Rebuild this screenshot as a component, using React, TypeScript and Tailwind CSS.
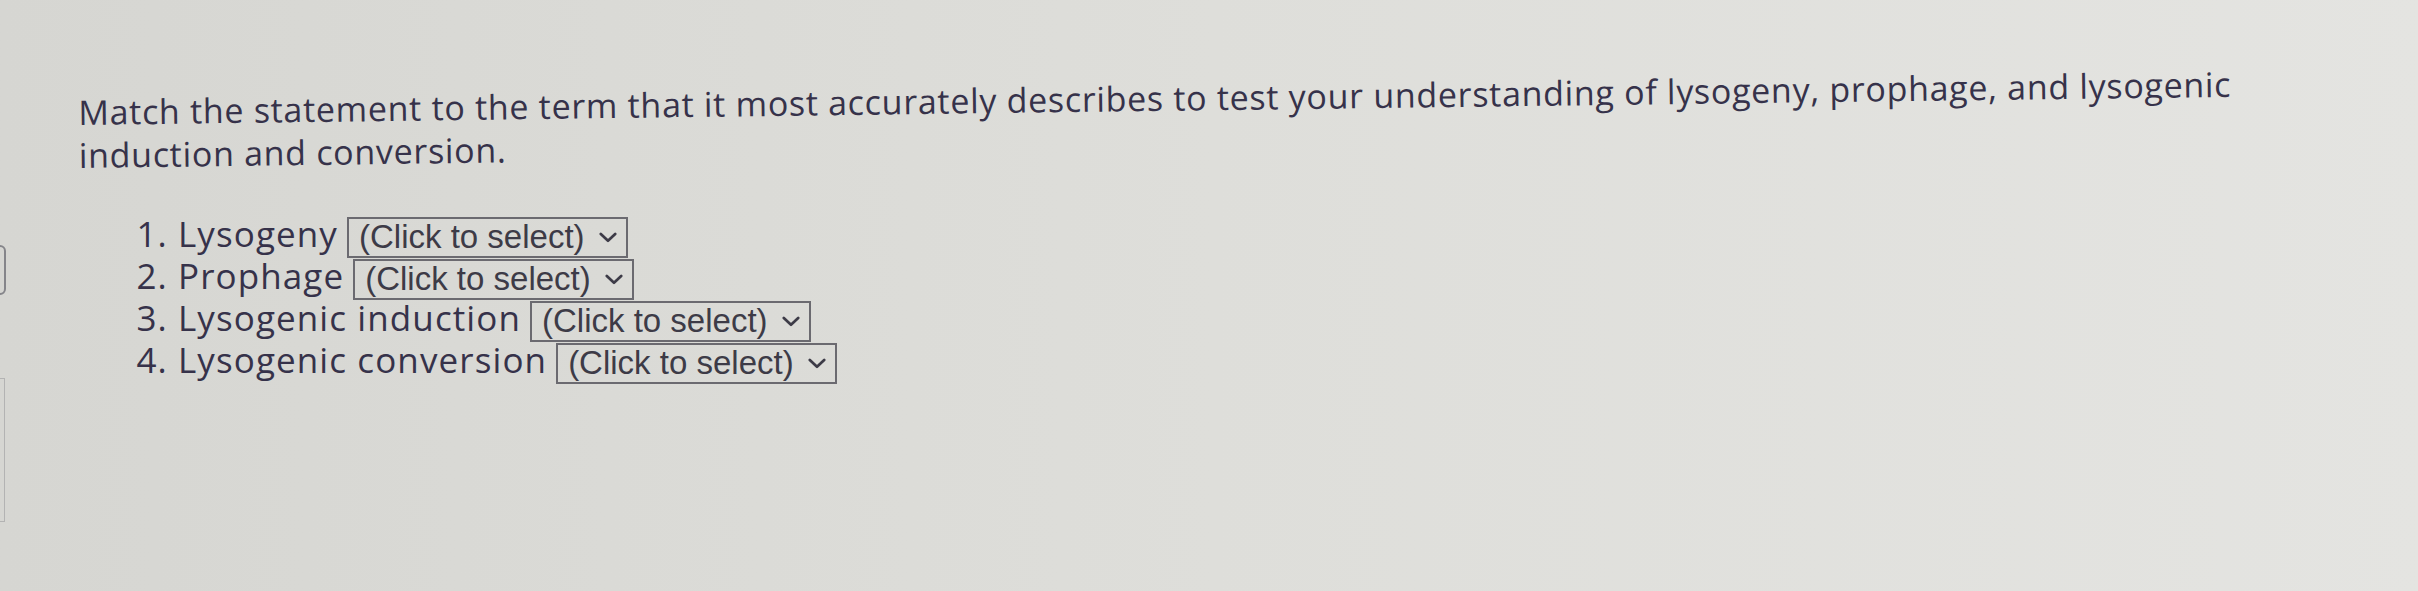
import React from "react";

const items = ["Lysogeny", "Prophage", "Lysogenic induction", "Lysogenic conversion"];

function Chevron() {
  return (
    <svg width="18" height="11" viewBox="0 0 18 11" fill="none" className="shrink-0">
      <path d="M1.8 2 L9 8.8 L16.2 2" stroke="#3d3b47" strokeWidth="2.7" strokeLinecap="round" strokeLinejoin="round" />
    </svg>
  );
}

function SelectBox() {
  return (
    <span className="-my-[4px] ml-[9px] inline-flex h-[41px] items-center gap-[14px] border-2 border-[#6b6a70] pl-[10px] pr-[9px] align-middle font-['Liberation_Sans',Arial,sans-serif] text-[33px] tracking-normal leading-none text-[#3d3b47]">
      <span className="-mt-[2px]">(Click to select)</span>
      <Chevron />
    </span>
  );
}

export default function App() {
  return (
    <div className="flex h-[591px] w-full overflow-hidden bg-gradient-to-r from-[#d6d6d2] via-[#dededa] to-[#e4e4e1]">
      {/* edge of the neighbouring panel */}
      <div className="flex w-[7px] shrink-0 flex-col">
        <div className="-ml-[8px] mt-[245px] h-[50px] w-[14px] rounded-[6px] border-2 border-[#85858a]" />
        <div className="-ml-[8px] mt-[83px] h-[144px] w-[13px] border border-[#b3b3b3]" />
      </div>

      <div className="flex flex-col pl-[71px] pt-[91px] font-['Open_Sans',sans-serif] text-[#36324a]">
        <p className="w-[2230px] origin-top-left rotate-[-0.75deg] text-[34px] leading-[43px] tracking-[0.7px]">
          Match the statement to the term that it most accurately describes to test your understanding of lysogeny, prophage, and lysogenic induction and conversion.
        </p>
        <ol className="mt-[36px] list-decimal pl-[100px] text-[35px] leading-[42px] tracking-[1.1px]">
          {items.map((t) => (
            <li key={t}>
              {t}
              <SelectBox />
            </li>
          ))}
        </ol>
      </div>
    </div>
  );
}
